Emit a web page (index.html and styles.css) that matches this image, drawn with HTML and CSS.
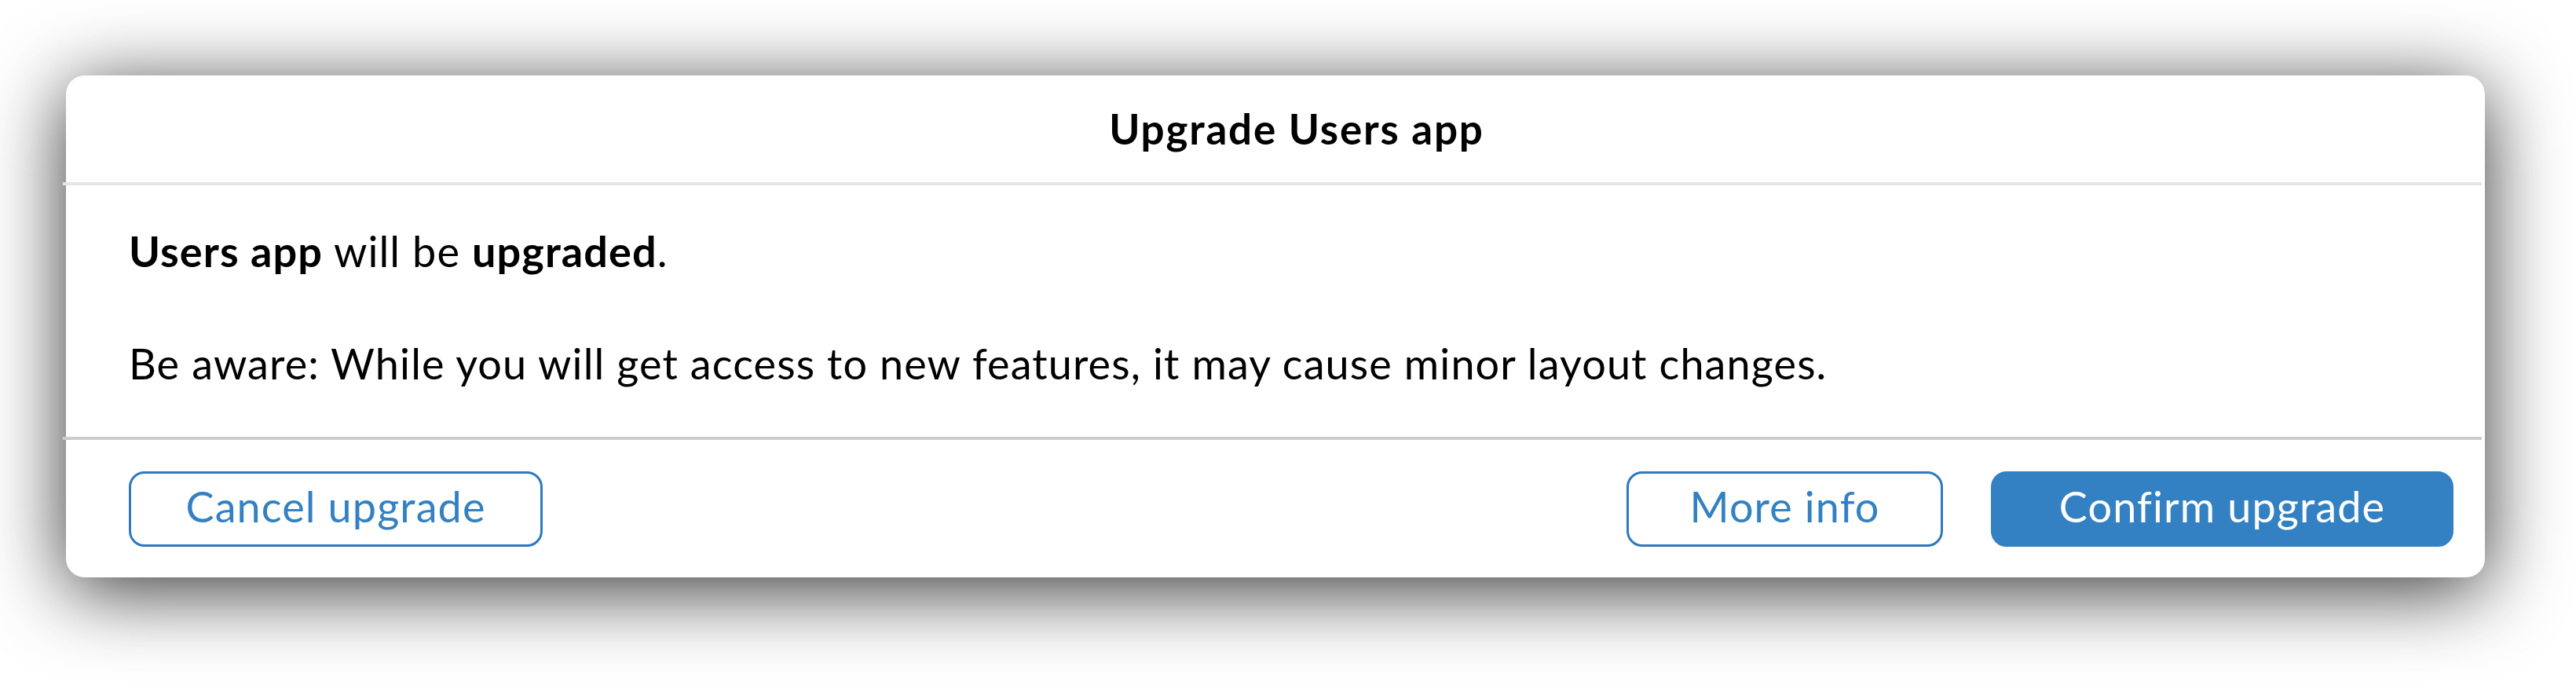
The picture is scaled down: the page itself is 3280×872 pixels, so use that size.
FILE: index.html
```html
<!DOCTYPE html>
<html lang="en">
<head>
<meta charset="utf-8">
<title>Upgrade Users app</title>
<link rel="stylesheet" href="styles.css">
</head>
<body>
  <div class="dialog" role="dialog" aria-labelledby="dlg-title">
    <header class="dialog-header">
      <h1 id="dlg-title" class="dialog-title">Upgrade Users app</h1>
    </header>
    <div class="divider divider-light"></div>
    <div class="dialog-body">
      <p class="line line-first"><strong>Users app</strong> will be <strong>upgraded</strong>.</p>
      <p class="line line-second">Be aware: While you will get access to new features, it may cause minor layout changes.</p>
    </div>
    <div class="divider divider-dark"></div>
    <footer class="dialog-footer">
      <button class="btn btn-outline btn-cancel" type="button">Cancel upgrade</button>
      <div class="footer-actions">
        <button class="btn btn-outline btn-info" type="button">More info</button>
        <button class="btn btn-primary btn-confirm" type="button">Confirm upgrade</button>
      </div>
    </footer>
  </div>
</body>
</html>
```

FILE: styles.css
```css
* {
  box-sizing: border-box;
}

html, body {
  margin: 0;
  padding: 0;
  background: #ffffff;
}

body {
  width: 3280px;
  height: 872px;
  padding: 96px 0 0 84px;
  font-family: "Lato", "Noto Sans", sans-serif;
  color: #000;
  overflow: hidden;
}

.dialog {
  width: 3080px;
  background: #fff;
  border-radius: 24px;
  box-shadow: 0 16px 100px rgba(0, 0, 0, 0.8);
  display: flex;
  flex-direction: column;
}

.dialog-header {
  height: 136px;
  display: flex;
  align-items: center;
  justify-content: center;
  padding-left: 54px;
}

.dialog-title {
  margin: 0;
  font-size: 53px;
  font-weight: 700;
  letter-spacing: 1.8px;
  line-height: 62px;
}

.divider {
  height: 4px;
  margin-left: -4px;
  margin-right: 4px;
}

.divider-light {
  background: #e5e5e5;
}

.divider-dark {
  background: #cccccc;
}

.dialog-body {
  padding: 53px 80px 62px 80px;
  font-size: 54px;
  letter-spacing: 1.1px;
}

.line {
  margin: 0;
  line-height: 62px;
}

.line-second {
  margin-top: 81px;
}

.line strong {
  font-weight: 700;
}

.dialog-footer {
  display: flex;
  align-items: center;
  justify-content: space-between;
  padding: 40px 40px 39px 80px;
}

.footer-actions {
  display: flex;
  gap: 61px;
}

.btn {
  height: 96px;
  border-radius: 20px;
  font-family: "Lato", "Noto Sans", sans-serif;
  font-size: 54px;
  font-weight: 400;
  letter-spacing: 1.1px;
  line-height: 62px;
  display: flex;
  align-items: center;
  justify-content: center;
  padding: 0 0 6px 0;
  cursor: pointer;
}

.btn-outline {
  background: #fff;
  border: 3px solid #2f79bd;
  color: #3381c3;
}

.btn-primary {
  background: #3381c3;
  border: 3px solid #3381c3;
  color: #fff;
}

.btn-cancel {
  width: 527px;
}

.btn-info {
  width: 403px;
}

.btn-confirm {
  width: 589px;
}
```
